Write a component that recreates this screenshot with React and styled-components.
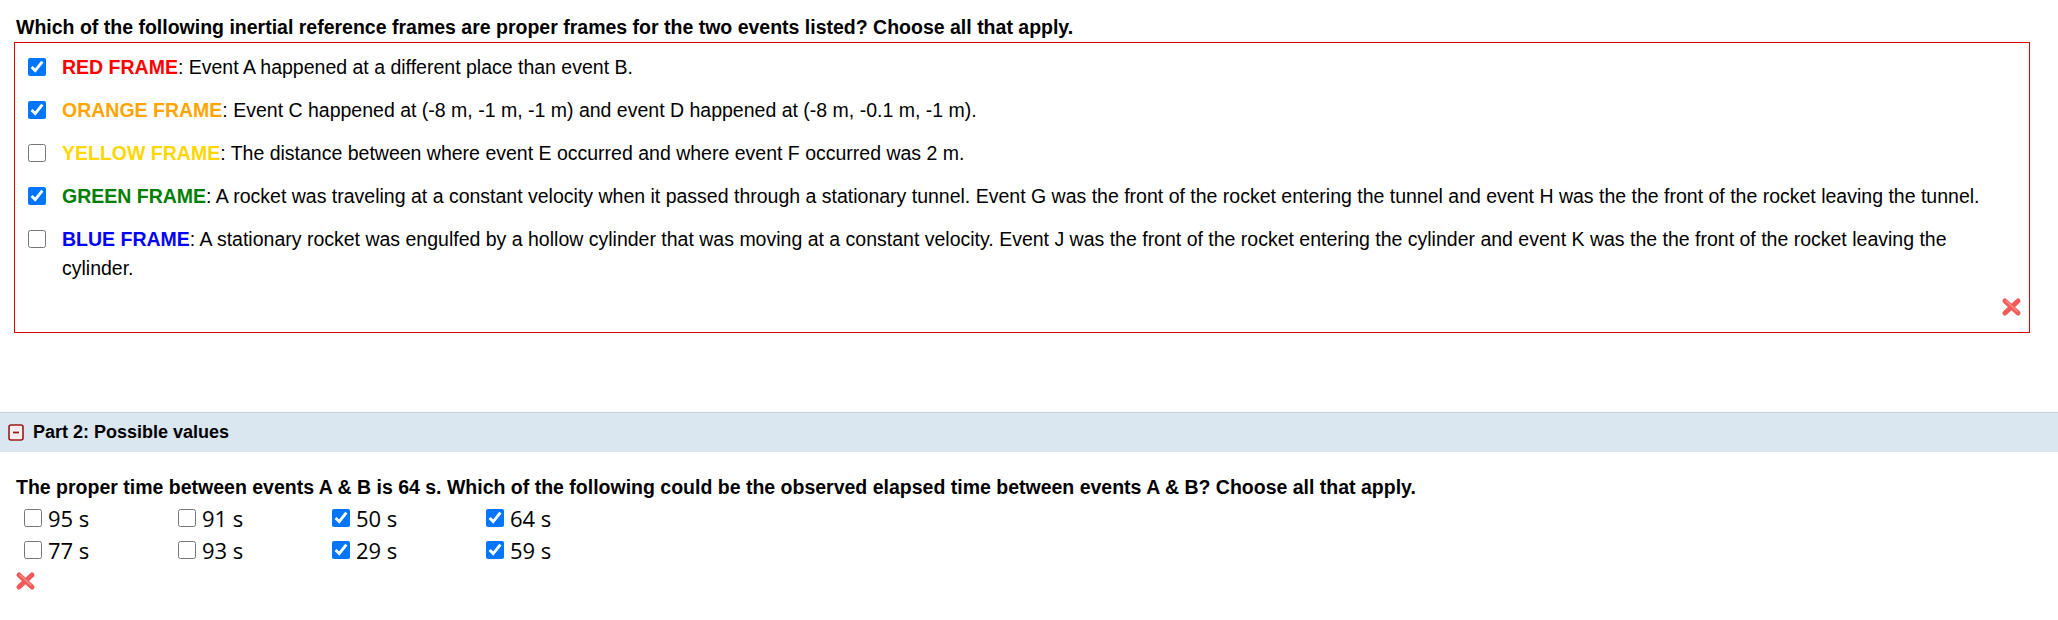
import React from 'react';
import styled, { createGlobalStyle } from 'styled-components';

const GlobalStyle = createGlobalStyle`
  html, body {
    margin: 0;
    padding: 0;
    background: #ffffff;
  }
  body {
    font-family: "Liberation Sans", Arial, sans-serif;
    font-size: 19.5px;
    color: #000000;
  }
`;

const frames = [
  {
    name: 'RED FRAME',
    color: '#ff0000',
    checked: true,
    text: 'Event A happened at a different place than event B.',
  },
  {
    name: 'ORANGE FRAME',
    color: '#ffa500',
    checked: true,
    text: 'Event C happened at (-8 m, -1 m, -1 m) and event D happened at (-8 m, -0.1 m, -1 m).',
  },
  {
    name: 'YELLOW FRAME',
    color: '#ffd700',
    checked: false,
    text: 'The distance between where event E occurred and where event F occurred was 2 m.',
  },
  {
    name: 'GREEN FRAME',
    color: '#008000',
    checked: true,
    text: 'A rocket was traveling at a constant velocity when it passed through a stationary tunnel. Event G was the front of the rocket entering the tunnel and event H was the the front of the rocket leaving the tunnel.',
  },
  {
    name: 'BLUE FRAME',
    color: '#0000ff',
    checked: false,
    text: 'A stationary rocket was engulfed by a hollow cylinder that was moving at a constant velocity. Event J was the front of the rocket entering the cylinder and event K was the the front of the rocket leaving the cylinder.',
  },
];

const values = [
  { label: '95 s', checked: false },
  { label: '91 s', checked: false },
  { label: '50 s', checked: true },
  { label: '64 s', checked: true },
  { label: '77 s', checked: false },
  { label: '93 s', checked: false },
  { label: '29 s', checked: true },
  { label: '59 s', checked: true },
];

function WrongMark() {
  return (
    <svg width="21" height="20" viewBox="0 0 21 20">
      <g stroke="#f25a5a" strokeWidth="5" strokeLinecap="round">
        <line x1="4" y1="4" x2="17" y2="16" />
        <line x1="17" y1="4" x2="4" y2="16" />
      </g>
      <g stroke="#ff8a8a" strokeWidth="1.5" strokeLinecap="round">
        <line x1="5" y1="4" x2="16" y2="14" />
      </g>
    </svg>
  );
}

function CollapseIcon() {
  return (
    <svg width="16" height="17" viewBox="0 0 16 17">
      <rect x="1" y="1" width="14" height="15" rx="2" fill="#fbeeee" stroke="#9b1c1c" strokeWidth="1.6" />
      <line x1="5" y1="8.5" x2="11" y2="8.5" stroke="#9b1c1c" strokeWidth="1.8" />
    </svg>
  );
}

export default function App() {
  return (
    <Page>
      <GlobalStyle />
      <Question>
        Which of the following inertial reference frames are proper frames for the two events listed? Choose all that apply.
      </Question>
      <AnswerBox>
        {frames.map((f) => (
          <FrameRow key={f.name}>
            <BoxCheck type="checkbox" defaultChecked={f.checked} />
            <FrameText>
              <FrameName color={f.color}>{f.name}</FrameName>
              <span>: {f.text}</span>
            </FrameText>
          </FrameRow>
        ))}
        <MarkRow>
          <WrongMark />
        </MarkRow>
      </AnswerBox>

      <PartHeader>
        <CollapseIcon />
        <PartTitle>Part 2: Possible values</PartTitle>
      </PartHeader>

      <Question2>
        The proper time between events A &amp; B is 64 s. Which of the following could be the observed elapsed time between events A &amp; B? Choose all that apply.
      </Question2>
      <ValueGrid>
        {values.map((v) => (
          <ValueItem key={v.label}>
            <Check type="checkbox" defaultChecked={v.checked} />
            <ValueLabel>{v.label}</ValueLabel>
          </ValueItem>
        ))}
      </ValueGrid>
      <BottomMark>
        <WrongMark />
      </BottomMark>
    </Page>
  );
}

const Page = styled.div`
  width: 2058px;
  min-height: 620px;
`;

const Question = styled.div`
  font-weight: bold;
  padding: 15px 0 0 16px;
  line-height: 24px;
  height: 27px;
`;

const AnswerBox = styled.div`
  margin: 0 28px 0 14px;
  border: 1px solid #e00000;
  padding: 10px 7px 15px 13px;
`;

const FrameRow = styled.div`
  display: flex;
  align-items: flex-start;
  margin-bottom: 14px;
  line-height: 29px;
`;

const Check = styled.input`
  width: 18px;
  height: 18px;
  margin: 0;
  flex-shrink: 0;
`;

const BoxCheck = styled(Check)`
  margin-top: 5px;
`;

const FrameText = styled.div`
  margin-left: 16px;
  padding-right: 20px;
`;

const FrameName = styled.span`
  color: ${(p) => p.color};
  font-weight: bold;
`;

const MarkRow = styled.div`
  display: flex;
  justify-content: flex-end;
  margin-top: 4px;
  height: 20px;
`;

const PartHeader = styled.div`
  margin-top: 79px;
  height: 39px;
  border-top: 1px solid #c8ced4;
  background: #dae6f0;
  display: flex;
  align-items: center;
  padding-left: 8px;
  gap: 9px;
`;

const PartTitle = styled.span`
  font-weight: bold;
  font-size: 18px;
`;

const Question2 = styled.div`
  font-weight: bold;
  padding: 23px 0 0 16px;
  line-height: 24px;
`;

const ValueGrid = styled.div`
  display: grid;
  grid-template-columns: repeat(4, 154px);
  row-gap: 14px;
  padding: 10px 0 0 24px;
`;

const ValueItem = styled.label`
  display: flex;
  align-items: center;
  gap: 6px;
  height: 18px;
`;

const ValueLabel = styled.span`
  font-family: "Open Sans", "Noto Sans", sans-serif;
  font-size: 22px;
  line-height: 18px;
  color: #000;
`;

const BottomMark = styled.div`
  padding: 12px 0 0 15px;
`;
